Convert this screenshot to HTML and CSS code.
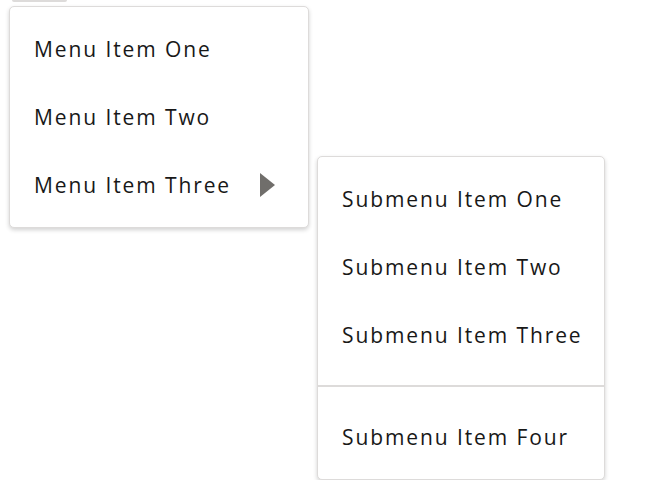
FILE: index.html
```html
<!DOCTYPE html>
<html lang="en">
<head>
<meta charset="utf-8">
<title>Menu</title>
<link rel="stylesheet" href="styles.css">
</head>
<body>
<div class="trigger"></div>
<div class="menus">
  <ul class="menu menu-main">
    <li class="item">Menu Item One</li>
    <li class="item">Menu Item Two</li>
    <li class="item item-sub">
      <span>Menu Item Three</span>
      <svg class="caret" width="15" height="24" viewBox="0 0 15 24"><path d="M0 0 L15 12 L0 24 Z" fill="#706e6b"/></svg>
    </li>
  </ul>
  <ul class="menu menu-flyout">
    <li class="item">Submenu Item One</li>
    <li class="item">Submenu Item Two</li>
    <li class="item">Submenu Item Three</li>
    <li class="divider" role="separator"></li>
    <li class="item">Submenu Item Four</li>
  </ul>
</div>
</body>
</html>
```
FILE: styles.css
```css
* { box-sizing: border-box; }
body {
  margin: 0;
  background: #fff;
  font-family: "Open Sans", "Noto Sans", sans-serif;
  color: #181818;
}
.trigger {
  width: 55px;
  height: 2px;
  margin-left: 12px;
  background: #dddbda;
  border-radius: 0 0 3px 3px;
}
.menus {
  display: flex;
  align-items: flex-start;
  gap: 8px;
  margin: 4px 0 0 9px;
}
.menu {
  list-style: none;
  margin: 0;
  padding: 8px 0;
  background: #fff;
  border: 1px solid #dddbda;
  border-radius: 5px;
  box-shadow: 0 2px 4px 0 rgba(0, 0, 0, 0.18);
}
.menu-main { width: 300px; }
.menu-flyout { width: 288px; margin-top: 150px; }
.item {
  height: 68px;
  display: flex;
  align-items: center;
  justify-content: space-between;
  padding: 0 33px 0 24px;
  font-size: 21px;
  letter-spacing: 1.9px;
  line-height: 1;
  white-space: nowrap;
}
.caret { display: block; }
.divider {
  height: 2px;
  margin: 16px 0;
  background: #dddbda;
}
```
